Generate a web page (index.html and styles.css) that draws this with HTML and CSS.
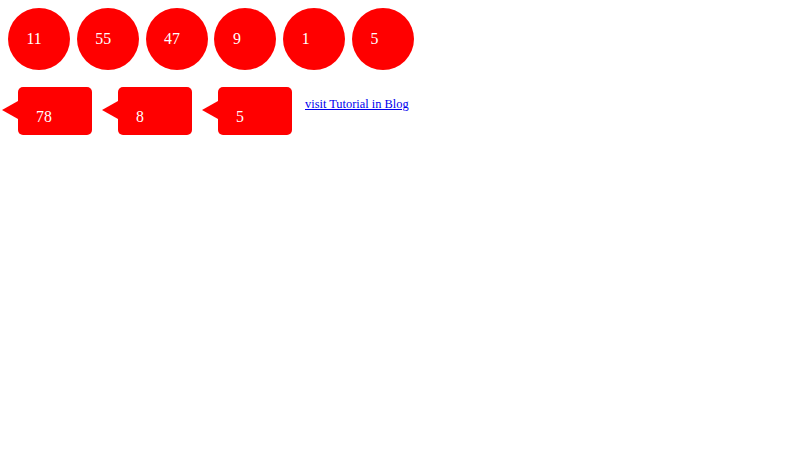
FILE: index.html
```html
<!DOCTYPE html>
<html>
<head>
<meta charset="utf-8">
<link rel="stylesheet" href="styles.css">
</head>
<body>
<div class="circles">
  <div class="circle">11</div>
  <div class="circle">55</div>
  <div class="circle">47</div>
  <div class="circle">9</div>
  <div class="circle">1</div>
  <div class="circle">5</div>
</div>
<div class="bubbles">
  <div class="bubble">78</div>
  <div class="bubble">8</div>
  <div class="bubble">5</div>
  <a class="link" href="#">visit Tutorial in Blog</a>
</div>
</body>
</html>
```

FILE: styles.css
```css
html, body {
  margin: 0;
  padding: 0;
  background: #fff;
}
body {
  padding: 8px;
  font-family: "Liberation Serif", "Times New Roman", serif;
}
.circles {
  display: flex;
  gap: 6.8px;
}
.circle {
  width: 62px;
  height: 62px;
  border-radius: 50%;
  background: #ff0000;
  color: #fff;
  font-size: 15.8px;
  display: flex;
  align-items: center;
  padding-left: 18.5px;
  box-sizing: border-box;
}
.bubbles {
  display: flex;
  align-items: flex-start;
  margin-top: 17px;
  padding-left: 10px;
}
.bubble {
  position: relative;
  width: 74px;
  height: 48px;
  border-radius: 5px;
  background: #ff0000;
  color: #fff;
  font-size: 15.8px;
  box-sizing: border-box;
  padding: 21px 0 0 18px;
  margin-right: 26px;
}
.bubble::before {
  content: "";
  position: absolute;
  left: -16px;
  top: 14px;
  border-style: solid;
  border-width: 9px 16px 9px 0;
  border-color: transparent #ff0000 transparent transparent;
}
.link {
  margin-left: -13px;
  margin-top: 10px;
  color: #0000ee;
  font-size: 12.4px;
  text-decoration: underline;
}
```
